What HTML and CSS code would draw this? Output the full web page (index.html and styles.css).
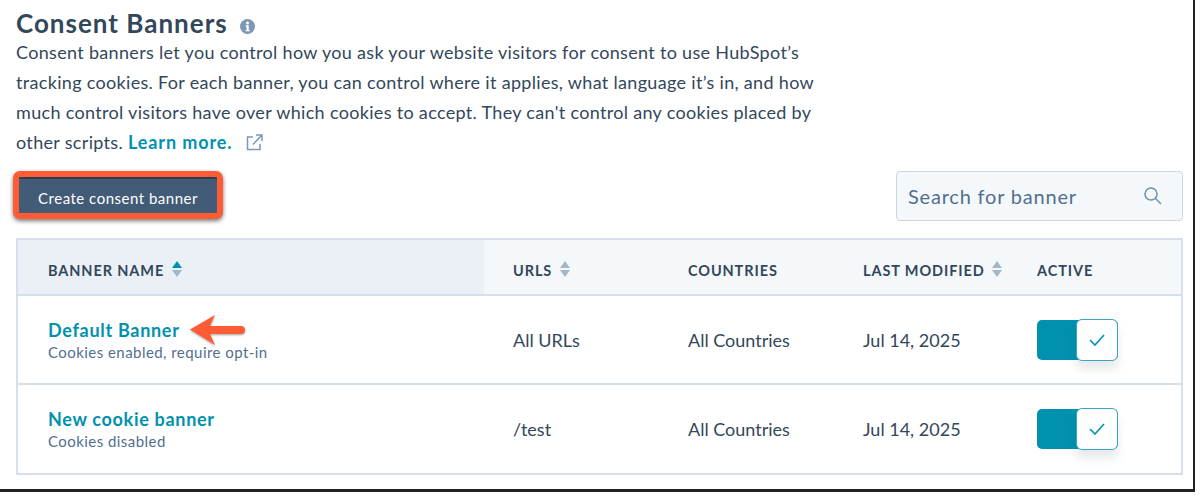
FILE: index.html
```html
<!DOCTYPE html>
<html lang="en">
<head>
  <meta charset="UTF-8">
  <title>Consent Banners</title>
  <link rel="stylesheet" href="styles.css">
</head>
<body>
  <div class="page">
    <h1 class="title">Consent Banners
      <svg class="info-icon" width="15" height="15" viewBox="0 0 15 15">
        <circle cx="7.5" cy="7.5" r="7.5" fill="#7c98b6"/>
        <circle cx="7.5" cy="4" r="1.5" fill="#fff"/>
        <path d="M5.8 6.3h2.9v4.6h1v1.4H5.6v-1.4h1V7.7h-.8z" fill="#fff"/>
      </svg>
    </h1>
    <p class="intro">Consent banners let you control how you ask your website visitors for consent to use HubSpot’s tracking cookies. For each banner, you can control where it applies, what language it’s in, and how much control visitors have over which cookies to accept. They can't control any cookies placed by other scripts. <a class="learn" href="#">Learn more.</a>
      <svg class="ext-icon" width="17" height="17" viewBox="0 0 17 17" fill="none" stroke="#7c98b6" stroke-width="1.5">
        <path d="M7 3H1.5v12.5H14V10"/>
        <path d="M7 10.5 15.5 1.5M10 1h6v6"/>
      </svg>
    </p>
    <div class="toolbar">
      <button class="create-btn">Create consent banner</button>
      <div class="search">
        <span>Search for banner</span>
        <svg width="18" height="18" viewBox="0 0 18 18" fill="none" stroke="#6f90b2" stroke-width="1.5">
          <circle cx="7" cy="7" r="6"/>
          <path d="M11.3 11.3 17 17"/>
        </svg>
      </div>
    </div>
    <table class="banners">
      <colgroup>
        <col class="col-name"><col class="col-urls"><col class="col-countries"><col class="col-modified"><col>
      </colgroup>
      <thead>
        <tr>
          <th class="sorted">BANNER NAME <span class="sort"><i class="up on"></i><i class="down"></i></span></th>
          <th>URLS <span class="sort"><i class="up"></i><i class="down"></i></span></th>
          <th>COUNTRIES</th>
          <th>LAST MODIFIED <span class="sort"><i class="up"></i><i class="down"></i></span></th>
          <th>ACTIVE</th>
        </tr>
      </thead>
      <tbody>
        <tr class="row-first">
          <td class="name-cell">
            <div class="name-line">
              <a class="name" href="#">Default Banner</a>
              <svg class="arrow" width="60" height="32" viewBox="0 0 60 32">
                <path d="M1 15.5 26 1l-5 11h31a4 4 0 0 1 0 8H21l5 11z" fill="#ff5c35"/>
              </svg>
            </div>
            <div class="sub">Cookies enabled, require opt-in</div>
          </td>
          <td>All URLs</td>
          <td>All Countries</td>
          <td>Jul 14, 2025</td>
          <td><div class="toggle"><span class="thumb"><svg width="16" height="12" viewBox="0 0 16 12" fill="none" stroke="#0091ae" stroke-width="1.6"><path d="M1 6l5 5 9-10"/></svg></span></div></td>
        </tr>
        <tr class="row-last">
          <td class="name-cell">
            <a class="name" href="#">New cookie banner</a>
            <div class="sub">Cookies disabled</div>
          </td>
          <td>/test</td>
          <td>All Countries</td>
          <td>Jul 14, 2025</td>
          <td><div class="toggle"><span class="thumb"><svg width="16" height="12" viewBox="0 0 16 12" fill="none" stroke="#0091ae" stroke-width="1.6"><path d="M1 6l5 5 9-10"/></svg></span></div></td>
        </tr>
      </tbody>
    </table>
  </div>
</body>
</html>
```
FILE: styles.css
```css
html, body {
  margin: 0;
  height: 100%;
  background: #fff;
}
body {
  font-family: 'Lato', 'Noto Sans', sans-serif;
  color: #33475b;
  width: 1195px;
  height: 492px;
  box-sizing: border-box;
  border-right: 2px solid #222;
  border-bottom: 3px solid #222;
  overflow: hidden;
}
.page {
  padding: 8px 0 0 16px;
  width: 1167px;
}
.title {
  margin: 0;
  font-size: 26px;
  line-height: 30px;
  font-weight: 700;
  letter-spacing: 1px;
  color: #33475b;
}
.info-icon {
  margin-left: 5px;
  vertical-align: -1px;
}
.intro {
  margin: -1px 0 0;
  width: 830px;
  font-size: 18px;
  line-height: 30px;
  letter-spacing: 0.32px;
  color: #33475b;
}
.learn {
  color: #0091ae;
  font-weight: 700;
  letter-spacing: 0.9px;
  text-decoration: none;
  margin-right: 9px;
}
.ext-icon {
  vertical-align: -2px;
}
.toolbar {
  display: flex;
  justify-content: space-between;
  align-items: flex-start;
  margin-top: 14px;
  height: 67px;
}
.create-btn {
  width: 210px;
  height: 48px;
  margin-left: -3px;
  padding: 5px 0 0;
  border: 6px solid #ff5c35;
  border-radius: 7px;
  background: #425b76;
  box-shadow: 0 2px 4px #0000008a, inset 0 2px 0 #2c3e50;
  color: #fff;
  font: 15px 'Lato', sans-serif;
  letter-spacing: 0.5px;
}
.search {
  display: flex;
  justify-content: space-between;
  align-items: center;
  box-sizing: border-box;
  width: 287px;
  height: 50px;
  padding: 0 20px 0 11px;
  background: #f5f8fa;
  border: 1px solid #cbd6e2;
  border-radius: 4px;
  color: #516f90;
  font-size: 20px;
  letter-spacing: 0.8px;
}
.banners {
  width: 1167px;
  border-collapse: collapse;
  table-layout: fixed;
  border: 2px solid #d6e0ec;
}
.col-name { width: 467px; }
.col-urls { width: 175px; }
.col-countries { width: 175px; }
.col-modified { width: 174px; }
thead tr { height: 56px; }
.row-first { height: 89px; }
.row-last { height: 90px; }
th {
  padding: 6px 0 0 29px;
  background: #f5f8fa;
  border-bottom: 2px solid #d6e0ec;
  text-align: left;
  font-size: 14.5px;
  font-weight: 700;
  letter-spacing: 0.9px;
  white-space: nowrap;
}
th.sorted {
  background: #eaf0f6;
  padding-left: 30px;
}
.sort {
  display: inline-block;
  height: 16px;
  margin: -6px 0 -6px 3px;
  vertical-align: 5px;
}
.sort i {
  display: block;
  width: 0;
  height: 0;
  border-left: 5px solid transparent;
  border-right: 5px solid transparent;
}
.sort .up {
  border-bottom: 7px solid #a5b6c9;
  margin-bottom: 2px;
}
.sort .down {
  border-top: 7px solid #a5b6c9;
}
.sort .up.on {
  border-bottom-color: #0091ae;
}
td {
  padding: 0 0 0 29px;
  border-bottom: 2px solid #d6e0ec;
  font-size: 18px;
}
td.name-cell {
  padding-left: 30px;
}
tr:last-child td {
  border-bottom: 0;
}
.name-line {
  position: relative;
}
.name {
  color: #0091ae;
  font-weight: 700;
  font-size: 18px;
  letter-spacing: 0.7px;
  text-decoration: none;
}
.arrow {
  position: absolute;
  left: 141px;
  top: -5px;
  filter: drop-shadow(0 1px 1px #0000005c);
}
.sub {
  margin-top: 2px;
  color: #516f90;
  font-size: 15px;
  letter-spacing: 0.45px;
}
.toggle {
  position: relative;
  box-sizing: border-box;
  width: 81px;
  height: 40px;
  background: #0091ae;
  border-radius: 5px;
}
.thumb {
  position: absolute;
  right: 0;
  top: -1px;
  display: flex;
  align-items: center;
  justify-content: center;
  box-sizing: border-box;
  width: 42px;
  height: 42px;
  background: #fff;
  border: 1.5px solid #3aa7c0;
  border-radius: 6px;
  box-shadow: 0 8px 10px #33475b1f;
}
```
